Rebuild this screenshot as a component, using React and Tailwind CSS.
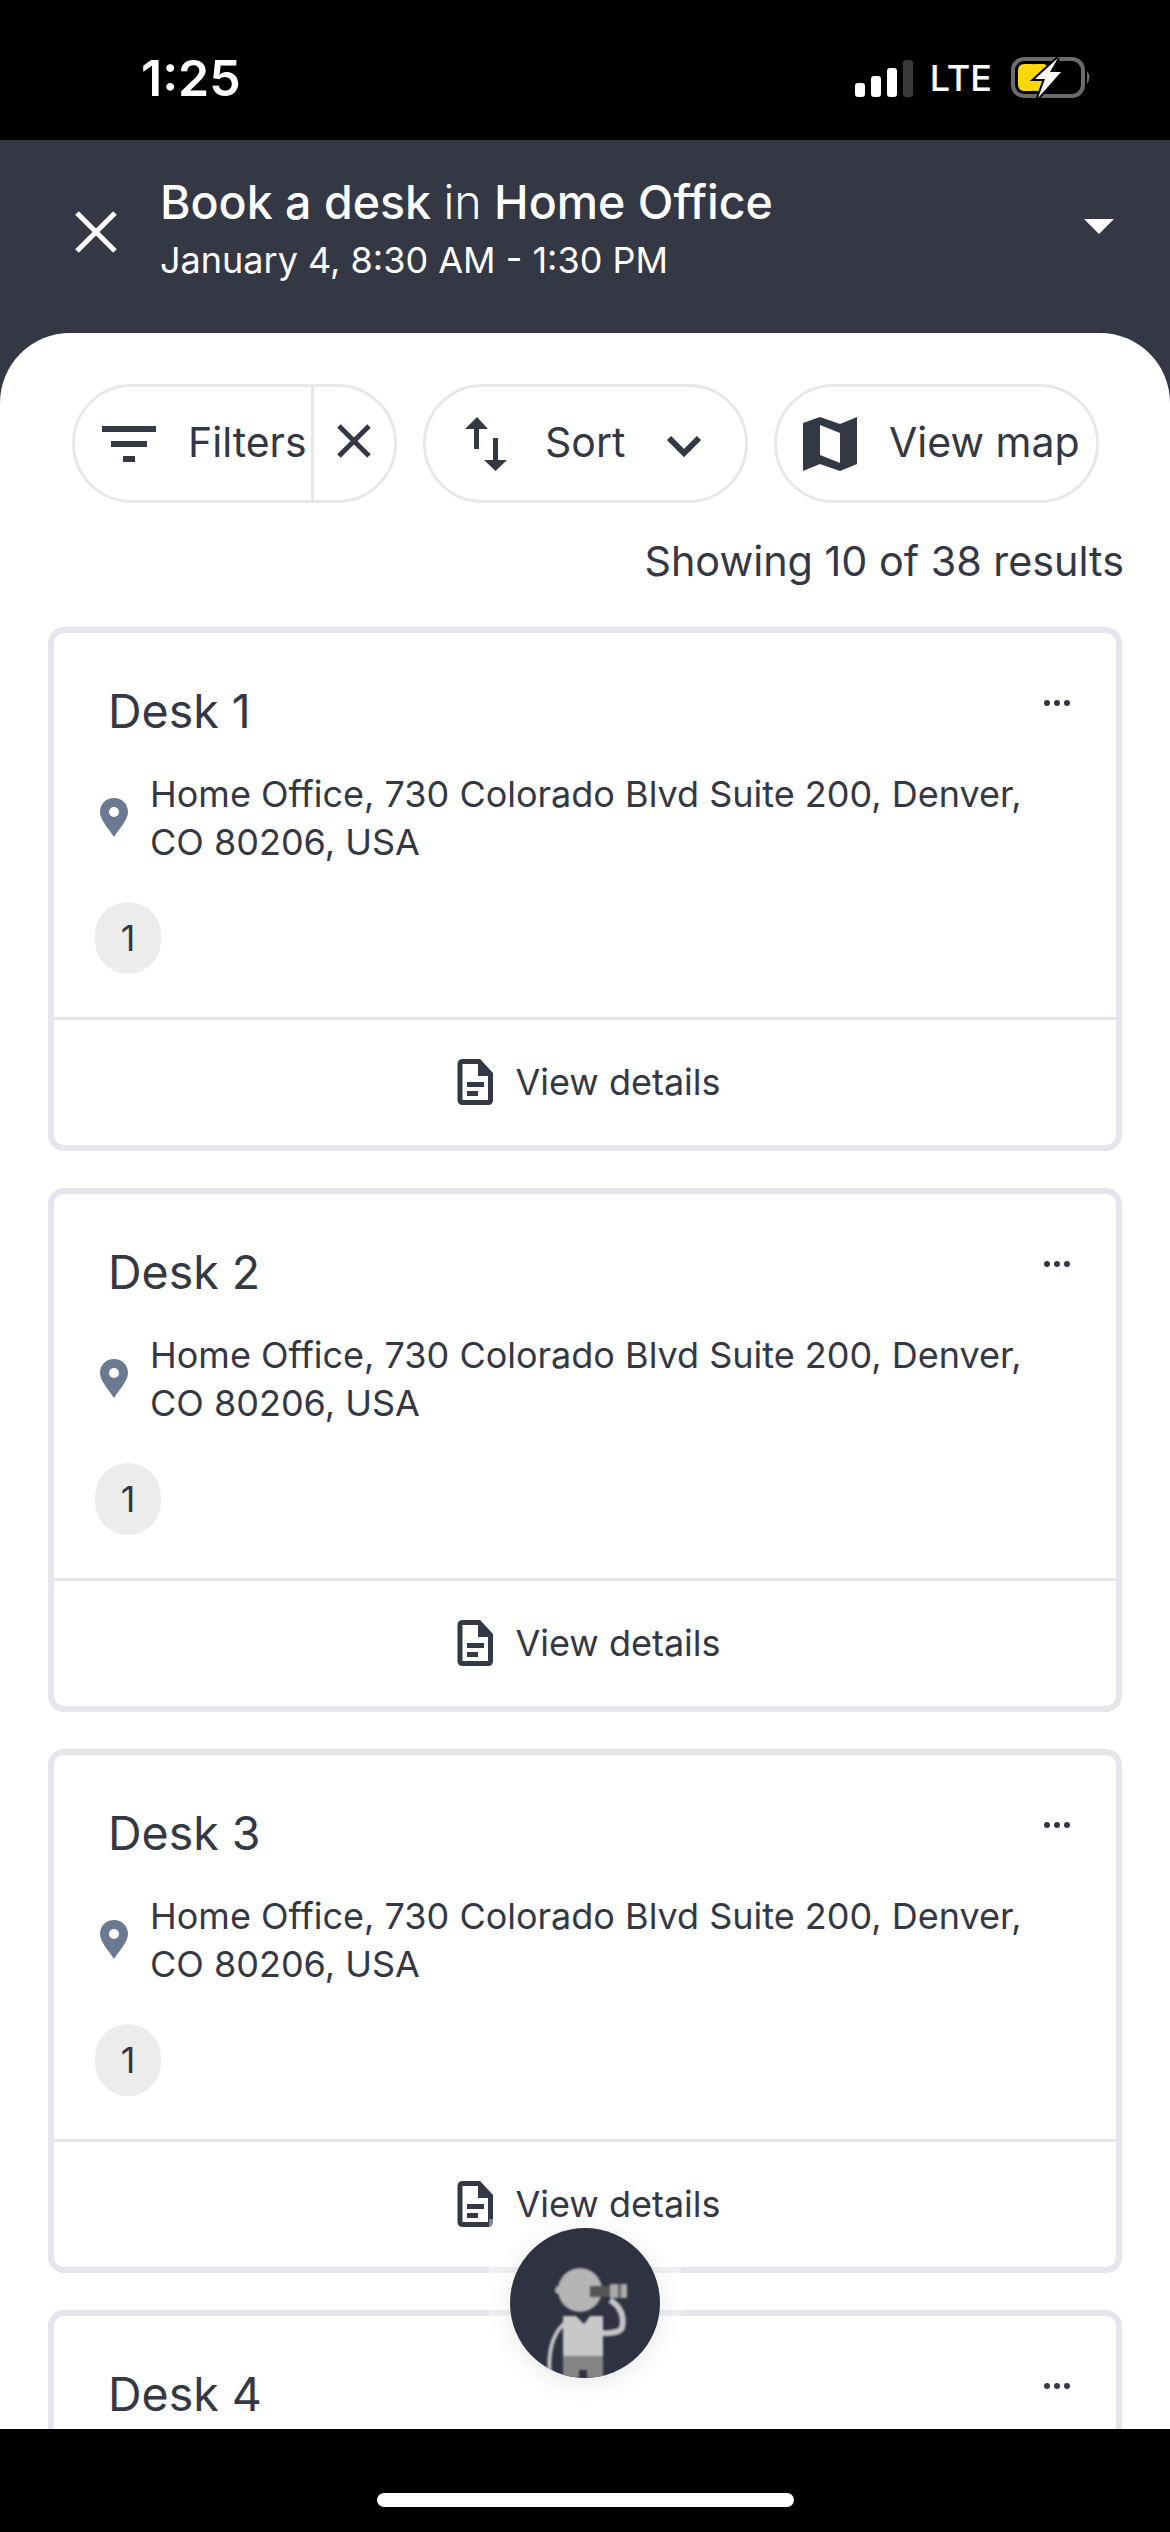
import React from 'react'

const desks = ["Desk 1", "Desk 2", "Desk 3", "Desk 4"]

const StatusBar = () => (
    <div className="flex h-[140px] shrink-0 items-center justify-between bg-black pl-[141px] pr-[78px] pt-[16px] text-white">
        <span className="text-[50px] font-semibold leading-none">1:25</span>
        <div className="flex items-center">
            <div className="flex items-end gap-[6px]">
                <div className="h-[14px] w-[10px] rounded-[3px] bg-white" />
                <div className="h-[21px] w-[10px] rounded-[3px] bg-white" />
                <div className="h-[29px] w-[10px] rounded-[3px] bg-white" />
                <div className="h-[37px] w-[10px] rounded-[3px] bg-[#3a3a3a]" />
            </div>
            <span className="ml-[17px] text-[36px] font-medium leading-none">LTE</span>
            <svg className="ml-[19px]" width="81" height="42" viewBox="0 0 81 42">
                <rect x="2" y="2" width="70" height="37" rx="11" fill="none" stroke="#6b6b6b" strokeWidth="4" />
                <path d="M76 14 Q81 20 76 27 Z" fill="#6b6b6b" />
                <rect x="7" y="7" width="20" height="27" rx="6" fill="#ffd60a" />
                <rect x="20" y="7" width="17" height="27" rx="5" fill="#ffd60a" />
                <path d="M47 1 L24 22 L34 22 L27 41 L50 15 L39 15 Z" fill="#fff" stroke="#000" strokeWidth="4" paintOrder="stroke" />
            </svg>
        </div>
    </div>
)

const Header = () => (
    <div className="h-[263px] shrink-0 bg-[#343744] text-white">
        <div className="flex items-start pl-[74px] pr-[56px] pt-[32px]">
            <svg className="mt-[38px]" width="44" height="44" viewBox="0 0 44 44">
                <path d="M3 3 L41 41 M41 3 L3 41" stroke="#fff" strokeWidth="5" />
            </svg>
            <div className="ml-[42px] flex-1">
                <div className="text-[46.5px] font-medium leading-[60px]">
                    Book a desk <span className="font-light">in</span> Home Office
                </div>
                <div className="mt-[6px] text-[36px] leading-[44px]">January 4, 8:30 AM - 1:30 PM</div>
            </div>
            <div className="mt-[47px] h-0 w-0 border-x-[15px] border-t-[15px] border-x-transparent border-t-white" />
        </div>
    </div>
)

const FiltersIcon = () => (
    <svg width="54" height="36" viewBox="0 0 54 36" fill="#343744">
        <rect x="0" y="0" width="54" height="6" />
        <rect x="9" y="15" width="36" height="6" />
        <rect x="21" y="30" width="12" height="6" />
    </svg>
)

const SortIcon = () => (
    <svg width="42" height="54" viewBox="0 0 42 54" fill="#343744">
        <path d="M0 12 L12 0 L23 12 H14 V32 H9 V12 Z" />
        <path d="M28 21 H33 V43 H42 L30.5 54 L19 43 H28 Z" />
    </svg>
)

const MapIcon = () => (
    <svg width="54" height="54" viewBox="0 0 54 54" fill="#343744">
        <path fillRule="evenodd" d="M0 6 L17 0 L37 7 L54 0 V47 L37 54 L17 47 L0 54 Z M17 8 V38 L37 46 V16 Z" />
    </svg>
)

const Chips = () => (
    <div className="flex gap-[26px] pl-[72px] text-[41px] leading-none text-[#343744]">
        <div className="flex h-[119px] w-[325px] rounded-full border-[3px] border-[#e8e8e8]">
            <div className="flex w-[236px] items-center pl-[27px]">
                <FiltersIcon />
                <span className="ml-[32px] pb-[3px]">Filters</span>
            </div>
            <div className="flex flex-1 items-center border-l-[3px] border-[#e5e7eb] pb-[6px] pl-[22px]">
                <svg width="36" height="36" viewBox="0 0 36 36">
                    <path d="M3 3 L33 33 M33 3 L3 33" stroke="#343744" strokeWidth="5" />
                </svg>
            </div>
        </div>
        <div className="flex h-[119px] w-[325px] items-center rounded-full border-[3px] border-[#e8e8e8] pl-[39px]">
            <SortIcon />
            <span className="ml-[38px] pb-[3px]">Sort</span>
            <svg className="ml-[41px] mt-[4px]" width="36" height="22" viewBox="0 0 36 22">
                <path d="M3 3 L18 18 L33 3" fill="none" stroke="#343744" strokeWidth="6" />
            </svg>
        </div>
        <div className="flex h-[119px] w-[325px] items-center rounded-full border-[3px] border-[#e8e8e8] pl-[26px]">
            <MapIcon />
            <span className="ml-[32px] pb-[3px]">View map</span>
        </div>
    </div>
)

const PinIcon = () => (
    <svg className="mt-[28px] shrink-0" width="28" height="39" viewBox="0 0 28 39">
        <path fillRule="evenodd" d="M14 0 C6 0 0 6 0 14 C0 22 9 31 14 39 C19 31 28 22 28 14 C28 6 22 0 14 0 Z M14 9 A5 5 0 1 1 14 19 A5 5 0 1 1 14 9 Z" fill="#6b7a90" />
    </svg>
)

const DocIcon = () => (
    <svg width="36" height="46" viewBox="0 0 36 46">
        <path d="M3 5 Q3 2.5 6 2.5 H22 L33.5 15 V41 Q33.5 43.5 31 43.5 H6 Q3 43.5 3 41 Z" fill="none" stroke="#343744" strokeWidth="5" />
        <path d="M21 1 L36 17 H21 Z" fill="#343744" />
        <rect x="10" y="23" width="17" height="5" fill="#343744" />
        <rect x="10" y="32" width="11" height="5" fill="#343744" />
    </svg>
)

const DeskCard = ({ name }) => (
    <div className="mx-[48px] shrink-0 rounded-[16px] border-[6px] border-[#e5e6ec] bg-white text-[#343744]">
        <div className="h-[387px] border-b-[3px] border-[#e5e6ec] pt-[50px]">
            <div className="flex items-start justify-between pl-[54px] pr-[46px]">
                <span className="text-[46.5px] leading-[56px]">{name}</span>
                <div className="mt-[17px] flex gap-[4px]">
                    <div className="h-[6px] w-[6px] rounded-full bg-[#343744]" />
                    <div className="h-[6px] w-[6px] rounded-full bg-[#343744]" />
                    <div className="h-[6px] w-[6px] rounded-full bg-[#343744]" />
                </div>
            </div>
            <div className="mt-[31px] flex pl-[46px]">
                <PinIcon />
                <div className="ml-[22px] w-[910px] text-[36px] leading-[48px]">
                    Home Office, 730 Colorado Blvd Suite 200, Denver, CO 80206, USA
                </div>
            </div>
            <div className="ml-[41px] mt-[36px] flex h-[72px] w-[66px] items-center justify-center rounded-full bg-[#ececec] text-[36px]">
                1
            </div>
        </div>
        <div className="flex h-[125px] items-center justify-center gap-[22px] pb-[2px] pl-[8px]">
            <DocIcon />
            <span className="text-[36px]">View details</span>
        </div>
    </div>
)

const LookoutButton = () => (
    <div className="absolute left-[489px] top-[2219px] flex h-[181px] w-[192px] justify-center bg-white/40 pt-[9px]">
        <div className="h-[150px] w-[150px] overflow-hidden rounded-full bg-[#2f3240] shadow-[0_4px_24px_rgba(0,0,0,0.1)]">
            <svg className="blur-[1px]" width="150" height="150" viewBox="0 0 150 150">
                <path d="M40 150 Q36 110 56 94" fill="none" stroke="#c4c4c4" strokeWidth="4" />
                <path d="M100 72 Q116 82 112 100 Q108 106 92 105" fill="none" stroke="#c4c4c4" strokeWidth="6" />
                <circle cx="70" cy="62" r="22" fill="#b5b5b5" />
                <circle cx="49" cy="62" r="4" fill="#b5b5b5" />
                <rect x="53" y="88" width="40" height="40" fill="#c8c8c8" />
                <rect x="53" y="128" width="40" height="22" fill="#858585" />
                <rect x="69" y="142" width="8" height="8" fill="#2f3240" />
                <path d="M66 88 L74 96 L80 88 Z" fill="#2f3240" />
                <rect x="80" y="58" width="22" height="11" fill="#555" />
                <rect x="100" y="56" width="17" height="14" fill="#aaa" />
                <rect x="108" y="56" width="3" height="14" fill="#666" />
            </svg>
        </div>
    </div>
)

const App = () => {
    return (
        <div className="relative flex h-[2532px] w-[1170px] flex-col overflow-hidden bg-[#343744] font-['Inter',sans-serif]">
            <StatusBar />
            <Header />
            <div className="-mt-[70px] flex min-h-0 flex-1 flex-col overflow-hidden rounded-t-[70px] bg-white pt-[51px]">
                <Chips />
                <div className="mr-[46px] mt-[34px] text-right text-[41.3px] leading-[48px] text-[#343744]">
                    Showing 10 of 38 results
                </div>
                <div className="mt-[42px] flex flex-col gap-[37px]">
                    {desks.map((desk) => (
                        <DeskCard key={desk} name={desk} />
                    ))}
                </div>
            </div>
            <div className="flex h-[103px] shrink-0 justify-center bg-black pt-[64px]">
                <div className="h-[14px] w-[417px] rounded-full bg-white" />
            </div>
            <LookoutButton />
        </div>
    )
}
export default App
